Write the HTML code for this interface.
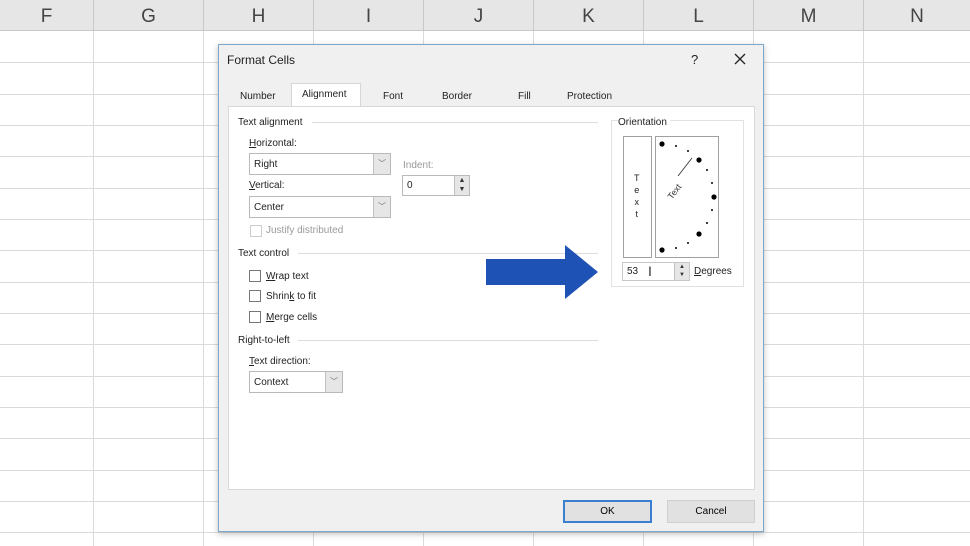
<!DOCTYPE html>
<html><head><style>
*{margin:0;padding:0;box-sizing:border-box}
body{width:970px;height:546px;overflow:hidden;background:#fff;font-family:"Liberation Sans",sans-serif;position:relative}
.a{position:absolute}
.hdr{top:0;left:0;width:970px;height:31px;background:#e6e6e6;border-bottom:1px solid #c8c8c8}
.col{position:absolute;top:0;height:31px;font-size:19px;color:#444;text-align:center;line-height:33px;border-right:1px solid #c8c8c8}
.vl{position:absolute;top:31px;width:1px;height:515px;background:#dadada}
.hl{position:absolute;left:0;width:970px;height:1px;background:#dadada}
.t{position:absolute;font-size:10px;color:#222;white-space:nowrap}
.box{position:absolute;background:#fff;border:1px solid #b9b9b9}
.dd{position:absolute;top:0;right:0;width:17px;height:100%;background:#e6e6e6;border-left:1px solid #c0c0c0;font-size:8px;color:#666;text-align:center;line-height:20px}
.sep{position:absolute;height:1px;background:#dcdcdc}
.cb{position:absolute;width:12px;height:12px;border:1px solid #777;background:#fff}
u{text-decoration:underline}
</style></head><body>
<div class="a hdr"></div>
<div class="col" style="left:0;width:94px">F</div>
<div class="col" style="left:94px;width:110px">G</div>
<div class="col" style="left:204px;width:110px">H</div>
<div class="col" style="left:314px;width:110px">I</div>
<div class="col" style="left:424px;width:110px">J</div>
<div class="col" style="left:534px;width:110px">K</div>
<div class="col" style="left:644px;width:110px">L</div>
<div class="col" style="left:754px;width:110px">M</div>
<div class="col" style="left:864px;width:106px;border:0">N</div>
<div class="vl" style="left:93px"></div><div class="vl" style="left:203px"></div><div class="vl" style="left:313px"></div><div class="vl" style="left:423px"></div><div class="vl" style="left:533px"></div><div class="vl" style="left:643px"></div><div class="vl" style="left:753px"></div><div class="vl" style="left:863px"></div>
<div class="hl" style="top:62px"></div><div class="hl" style="top:94px"></div><div class="hl" style="top:125px"></div><div class="hl" style="top:156px"></div><div class="hl" style="top:188px"></div><div class="hl" style="top:219px"></div><div class="hl" style="top:250px"></div><div class="hl" style="top:282px"></div><div class="hl" style="top:313px"></div><div class="hl" style="top:344px"></div><div class="hl" style="top:376px"></div><div class="hl" style="top:407px"></div><div class="hl" style="top:438px"></div><div class="hl" style="top:470px"></div><div class="hl" style="top:501px"></div><div class="hl" style="top:532px"></div>

<div class="a" style="left:218px;top:44px;width:546px;height:488px;background:#f0f0f0;border:1px solid #7fa7c9;box-shadow:0 2px 6px rgba(0,0,0,.25)"></div>
<div class="t" style="left:227px;top:53px;font-size:12px">Format Cells</div>
<div class="t" style="left:691px;top:52px;font-size:13px">?</div>
<svg class="a" style="left:734px;top:53px" width="12" height="12"><path d="M1 1L11 11M11 1L1 11" stroke="#222" stroke-width="1.3"/></svg>
<div class="a" style="left:291px;top:83px;width:70px;height:24px;background:#fff;border:1px solid #d6d6d6;border-bottom:0"></div>
<div class="t" style="left:240px;top:91px">Number</div>
<div class="t" style="left:302px;top:89px">Alignment</div>
<div class="t" style="left:383px;top:91px">Font</div>
<div class="t" style="left:442px;top:91px">Border</div>
<div class="t" style="left:518px;top:91px">Fill</div>
<div class="t" style="left:567px;top:91px">Protection</div>
<div class="a" style="left:228px;top:106px;width:527px;height:384px;background:#fff;border:1px solid #d9d9d9"></div>

<div class="t" style="left:238px;top:117px">Text alignment</div>
<div class="sep" style="left:312px;top:122px;width:286px"></div>
<div class="t" style="left:249px;top:138px"><u>H</u>orizontal:</div>
<div class="box" style="left:249px;top:153px;width:142px;height:22px"><span class="t" style="left:4px;top:5px">Right</span><div class="dd">﹀</div></div>
<div class="t" style="left:403px;top:160px;color:#999">Indent:</div>
<div class="box" style="left:402px;top:175px;width:68px;height:21px"><span class="t" style="left:4px;top:4px">0</span><div class="dd" style="width:15px;line-height:9px;font-size:7px;color:#333">▲<br>▼</div></div>
<div class="t" style="left:249px;top:180px"><u>V</u>ertical:</div>
<div class="box" style="left:249px;top:196px;width:142px;height:22px"><span class="t" style="left:4px;top:5px">Center</span><div class="dd">﹀</div></div>
<div class="cb" style="left:250px;top:225px;border-color:#ccc"></div>
<div class="t" style="left:266px;top:225px;color:#9a9a9a">Justify distributed</div>

<div class="t" style="left:238px;top:248px">Text control</div>
<div class="sep" style="left:298px;top:253px;width:300px"></div>
<div class="cb" style="left:249px;top:270px"></div><div class="t" style="left:266px;top:271px"><u>W</u>rap text</div>
<div class="cb" style="left:249px;top:290px"></div><div class="t" style="left:266px;top:291px">Shrin<u>k</u> to fit</div>
<div class="cb" style="left:249px;top:311px"></div><div class="t" style="left:266px;top:312px"><u>M</u>erge cells</div>
<div class="t" style="left:238px;top:335px">Right-to-left</div>
<div class="sep" style="left:298px;top:340px;width:300px"></div>
<div class="t" style="left:249px;top:356px"><u>T</u>ext direction:</div>
<div class="box" style="left:249px;top:371px;width:94px;height:22px"><span class="t" style="left:4px;top:5px">Context</span><div class="dd">﹀</div></div>

<div class="a" style="left:611px;top:120px;width:133px;height:167px;border:1px solid #e2e2e2"></div>
<div class="t" style="left:618px;top:117px;background:#fff;padding-right:3px">Orientation</div>
<div class="a" style="left:623px;top:136px;width:29px;height:122px;border:1px solid #a0a0a0"></div>
<div class="t" style="left:634px;top:172px;font-size:9px;line-height:12px;text-align:center">T<br>e<br>x<br>t</div>
<div class="a" style="left:655px;top:136px;width:64px;height:122px;border:1px solid #a0a0a0"></div>
<svg class="a" style="left:655px;top:136px" width="64" height="122">
<g fill="#000">
<circle cx="7" cy="8" r="2.6"/><circle cx="44" cy="24" r="2.6"/><circle cx="59" cy="61" r="2.6"/><circle cx="44" cy="98" r="2.6"/><circle cx="7" cy="114" r="2.6"/>
<circle cx="21" cy="10" r="1"/><circle cx="33" cy="15" r="1"/><circle cx="52" cy="34" r="1"/><circle cx="57" cy="47" r="1"/><circle cx="57" cy="74" r="1"/><circle cx="52" cy="87" r="1"/><circle cx="33" cy="107" r="1"/><circle cx="21" cy="112" r="1"/>
</g>
<line x1="23" y1="40" x2="37" y2="22" stroke="#444" stroke-width="1"/>
<text x="0" y="0" font-size="9" font-family="Liberation Sans" fill="#333" transform="translate(17,64) rotate(-53)">Text</text>
</svg>
<div class="box" style="left:622px;top:262px;width:68px;height:19px;border-color:#c8c8c8"><span class="t" style="left:4px;top:3px">53</span><span class="t" style="left:25px;top:0;font-size:14px;color:#333">I</span><div class="dd" style="width:15px;line-height:8px;font-size:6px;color:#333">▲<br>▼</div></div>
<div class="t" style="left:694px;top:266px"><u>D</u>egrees</div>

<div class="a" style="left:563px;top:500px;width:89px;height:23px;background:#e1e1e1;border:2px solid #3a7fd0;font-size:10px;text-align:center;line-height:19px">OK</div>
<div class="a" style="left:667px;top:500px;width:88px;height:23px;background:#e1e1e1;border:1px solid #cfcfcf;font-size:10px;text-align:center;line-height:21px">Cancel</div>

<svg class="a" style="left:484px;top:243px" width="116" height="58"><polygon points="2,16 81,16 81,2 114,29 81,56 81,42 2,42" fill="#1f52b5"/></svg>
</body></html>
